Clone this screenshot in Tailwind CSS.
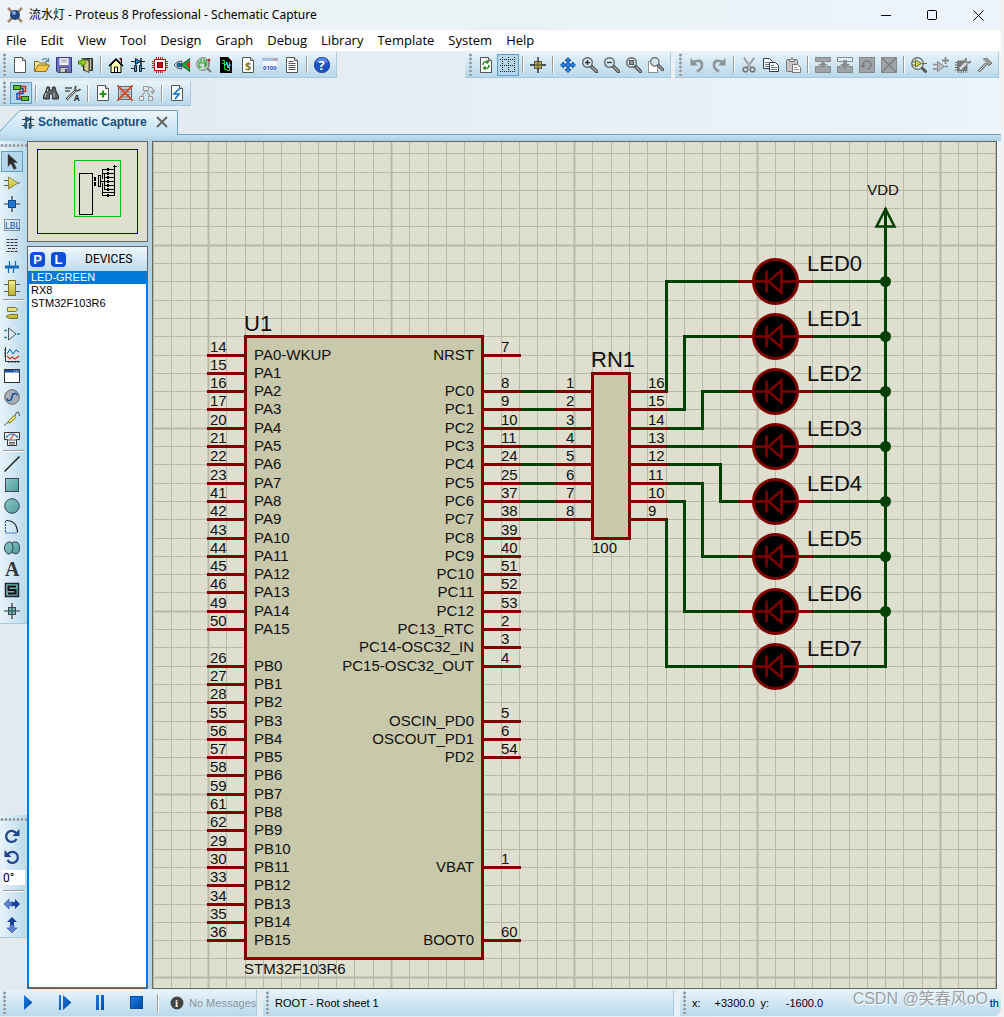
<!DOCTYPE html>
<html lang="en">

<head>
    <meta charset="UTF-8">
    <meta name="viewport" content="width=device-width, initial-scale=1.0">
    <title>流水灯 - Proteus 8 Professional - Schematic Capture</title>
    <script src="https://cdn.jsdelivr.net/npm/@tailwindcss/browser@4"></script>
</head>

<body class="h-screen overflow-hidden bg-[#f1f1f1] font-['Open_Sans','Noto_Sans_CJK_SC',sans-serif] text-black">

    <!-- shared icon parts -->
    <svg class="absolute h-0 w-0">
        <defs>
            <linearGradient id="tabfill" x1="0" y1="0" x2="0" y2="1">
                <stop offset="0" stop-color="#eef6fb" />
                <stop offset="1" stop-color="#bfe0f2" />
            </linearGradient>
            <linearGradient id="teal" x1="0" y1="0" x2="1" y2="1">
                <stop offset="0" stop-color="#8cc8c8" />
                <stop offset="1" stop-color="#4f9a98" />
            </linearGradient>
            <linearGradient id="gold" x1="0" y1="0" x2="0" y2="1">
                <stop offset="0" stop-color="#f2ee8c" />
                <stop offset="1" stop-color="#b9b02c" />
            </linearGradient>
            <linearGradient id="play" x1="0" y1="0" x2="1" y2="1">
                <stop offset="0" stop-color="#1a7ee6" />
                <stop offset="1" stop-color="#0048a0" />
            </linearGradient>
        </defs>
        <symbol id="page" viewBox="0 0 16 16">
            <path d="M2.500 .5h8l3 3v12h-11z" fill="#fdfdfd" stroke="#555" />
            <path d="M10.500 .5v3h3" fill="#ddd" stroke="#555" />
        </symbol>
        <symbol id="lens" viewBox="0 0 16 16">
            <path d="M9.500 9.500l5 5" stroke="#444" stroke-width="3.500" stroke-linecap="round" />
            <path d="M10 10l4.500 4.500" stroke="#aaa" stroke-width="1.500" stroke-linecap="round" />
            <circle cx="5.500" cy="5.500" r="4.800" fill="#d4e8f4" stroke="#666" stroke-width="1.400" />
        </symbol>
        <symbol id="parts" viewBox="0 0 16 16">
            <path d="M1 4.500h14M1 11.500h4M11 11.500h4" stroke="#222" />
            <path d="M5.500 1.500v6l5-3z" fill="#1883c9" stroke="#123" />
            <path d="M11 1v7" stroke="#123" stroke-width="1.500" />
            <path d="M4.500 8.500h2v6h-2zM9.500 8.500h2v6h-2z" fill="#3aa0dc" stroke="#123" />
        </symbol>
    </svg>

    <div class="mr-[3px] flex h-full flex-col bg-gradient-to-r from-[#e2e9ef] to-[#edf3fa]">

        <!-- title bar -->
        <header class="flex h-[30px] shrink-0 items-center rounded-tr-lg bg-gradient-to-r from-[#f0f3f7] via-[#e9f3f5] to-[#edf3fb] pl-[7px]">
            <svg class="h-4 w-4" viewBox="0 0 16 16">
                <path d="M1 1l4 4M15 1l-4 4M1 15l4-4M15 15l-4-4" stroke="#a08c70" stroke-width="2.500" />
                <circle cx="8" cy="8" r="5" fill="#24457f" />
                <circle cx="7" cy="6" r="2" fill="#7fa6e0" />
            </svg>
            <h1 class="ml-[6px] font-['Noto_Sans','Noto_Sans_CJK_SC',sans-serif] text-[12px]">流水灯 - Proteus 8 Professional - Schematic Capture</h1>
            <div class="ml-auto flex [&>button]:grid [&>button]:h-[30px] [&>button]:w-[46px] [&>button]:place-items-center">
                <button aria-label="Minimize"><svg width="11" height="11"><path d="M0 5.500h10" stroke="#000" /></svg></button>
                <button aria-label="Maximize"><svg width="11" height="11"><rect x=".5" y=".5" width="9" height="9" rx="1" fill="none" stroke="#000" /></svg></button>
                <button aria-label="Close"><svg width="11" height="11"><path d="M.5 .5l10 10M10.500 .5l-10 10" stroke="#000" /></svg></button>
            </div>
        </header>

        <!-- menu -->
        <nav class="flex h-[22px] shrink-0 items-center gap-[14px] border-b border-[#eee] bg-white pt-px pl-[6px] text-[13px]">
            <button>File</button>
            <button>Edit</button>
            <button>View</button>
            <button>Tool</button>
            <button>Design</button>
            <button>Graph</button>
            <button>Debug</button>
            <button>Library</button>
            <button>Template</button>
            <button>System</button>
            <button>Help</button>
        </nav>

        <!-- toolbar row 1 -->
        <div class="flex h-[26px] shrink-0">
            <div class="flex w-[337px] items-center border-r border-b border-[#a9c9dd] bg-gradient-to-b from-[#e8f3fa] to-[#b9d9eb] pl-[3px] [&_svg]:h-4 [&_svg]:w-4 [&>button]:grid [&>button]:h-[22px] [&>button]:w-[22px] [&>button]:place-items-center [&>hr]:mx-[3px] [&>hr]:h-[17px] [&>hr]:w-[2px] [&>hr]:border-0 [&>hr]:border-l [&>hr]:border-[#999] [&>hr]:bg-white">
                <span class="mr-[3px] h-[24px] w-[3px] bg-[radial-gradient(circle,#8d9ba6_1px,#eef4f8_2px)] bg-[size:3px_4px]"></span>
                <button aria-label="New project"><svg><use href="#page" /></svg></button>
                <button aria-label="Open project"><svg viewBox="0 0 16 16"><path d="M.5 14.500v-10h4l1 1.500h7v2" fill="#f7e79a" stroke="#8a6d1c" /><path d="M.5 14.500L4 8h11.500l-3.500 6.500z" fill="#f6c94b" stroke="#8a6d1c" /><path d="M8 3q4-3 6 1M14.500 1v3.500H11" fill="none" stroke="#5580a8" stroke-width="1.200" /></svg></button>
                <button aria-label="Save project"><svg viewBox="0 0 16 16"><path d="M.5 .5h15v15H2l-1.500-1.500z" fill="#6f6fc8" stroke="#34347c" /><path d="M3.500 1h9v7h-9z" fill="#f2f2fa" /><path d="M5 3h6M5 5h6" stroke="#999" /><path d="M4 10.500h8v5H4z" fill="#ccc" stroke="#555" /><path d="M9 12h2v3H9z" fill="#44448c" /></svg></button>
                <button aria-label="Close project"><svg viewBox="0 0 16 16"><path d="M5.500 1.500h9v12h-9z" fill="#555" stroke="#333" /><path d="M6 2l5 2v11.500l-5-2.500z" fill="#d3d08a" stroke="#444" /><path d="M12.500 2v11" stroke="#c9c980" /><path d="M.5 4H4V1l4 4.500L4 10V7H.5z" fill="#9bd11a" stroke="#46720b" /></svg></button>
                <hr>
                <button aria-label="Home page"><svg viewBox="0 0 16 16"><path d="M3 8v7.500h10V8L8 3z" fill="#ffffb0" stroke="#000" /><path d="M1 9l7-7 7 7" fill="none" stroke="#000" stroke-width="1.500" /><path d="M11.500 1.500h2V6" fill="#c22" stroke="#000" /><path d="M6.500 10h3v5.500h-3z" fill="#fff" stroke="#000" /></svg></button>
                <button aria-label="Schematic capture"><svg><use href="#parts" /></svg></button>
                <button aria-label="PCB layout"><svg viewBox="0 0 16 16"><path d="M4.500 0v16M6.500 0v16M8.500 0v16M10.500 0v16M0 4.500h16M0 6.500h16M0 8.500h16M0 10.500h16" stroke="#c01818" /><rect x="2.500" y="2.500" width="11" height="11" fill="#fff" stroke="#b00" /><rect x="5.500" y="5.500" width="5" height="5" fill="#c01010" stroke="#700" /></svg></button>
                <button aria-label="3D visualizer"><svg viewBox="0 0 16 16"><path d="M7 8l9-6.500v13z" fill="#16a83e" stroke="#0a4a18" /><path d="M12 7l4-3v8z" fill="#d22" /><path d="M0 8q4-5 8-4-2 4 0 8-4 1-8-4z" fill="#e8f4fa" stroke="#456" /><circle cx="5" cy="8" r="2.200" fill="#1778a8" stroke="#123" stroke-width=".6" /></svg></button>
                <button aria-label="Gerber viewer"><svg viewBox="0 0 16 16"><circle cx="7" cy="7" r="6.300" fill="#cfe0d8" stroke="#777" /><path d="M3 4v6h3M5 2v4h4v5M8 2v3M10 3v6" fill="none" stroke="#2a9a2a" stroke-width="1.200" /><path d="M11 11l4 4" stroke="#777" stroke-width="2" /><path d="M12.500 2.500v8" stroke="#888" stroke-width="2" /><circle cx="13" cy="3" r="1.500" fill="#b04040" /></svg></button>
                <button aria-label="Design explorer"><svg viewBox="0 0 16 16"><rect x="2" y="0" width="12" height="16" fill="#000" /><path d="M4 3.500h2.500v9H9M4 6.500h2M11.500 5v8M9 13.500h3" fill="none" stroke="#0d3" /><path d="M6 8h2l1-3 1 6 1-3h2" fill="none" stroke="#3ff" /><path d="M10 0l4 4V0z" fill="#fff" /></svg></button>
                <button aria-label="Bill of materials"><svg viewBox="0 0 16 16"><use href="#page" /><text x="5" y="13" font-size="11" font-weight="bold" fill="#8a7a20">$</text></svg></button>
                <button aria-label="Source code"><svg viewBox="0 0 16 16"><rect x="0" y="1" width="16" height="13" fill="#f3f6fc" stroke="#a8b8cc" stroke-width=".5" /><rect x="0" y="1" width="16" height="3" fill="#a8c0e4" /><path d="M11 2.500h1M13 2.500h2" stroke="#e63" /><text x="1" y="13" font-size="6" font-weight="bold" fill="#1a50c8">0100</text></svg></button>
                <button aria-label="Project notes"><svg viewBox="0 0 16 16"><use href="#page" /><path d="M4.500 4.500h5M4.500 6.500h7M4.500 8.500h7M4.500 10.500h7M4.500 12.500h7" stroke="#555" /></svg></button>
                <hr>
                <button aria-label="Help"><svg viewBox="0 0 16 16"><circle cx="8" cy="8" r="7.800" fill="#1c4fc0" stroke="#0c2f86" stroke-width=".6" /><path d="M2 6a6 5 0 0 1 12 0q-6-2-12 0z" fill="#5d8cec" /><text x="4.500" y="13" font-size="13" font-weight="bold" fill="#fff">?</text></svg></button>
            </div>

            <div class="ml-auto flex w-[206px] items-center border-r border-b border-[#a9c9dd] bg-gradient-to-b from-[#e8f3fa] to-[#b9d9eb] pl-[4px] [&_svg]:h-4 [&_svg]:w-4 [&>button]:grid [&>button]:h-[22px] [&>button]:w-[22px] [&>button]:place-items-center [&>hr]:mx-[3px] [&>hr]:h-[17px] [&>hr]:w-[2px] [&>hr]:border-0 [&>hr]:border-l [&>hr]:border-[#999] [&>hr]:bg-white">
                <span class="mr-[3px] h-[24px] w-[3px] bg-[radial-gradient(circle,#8d9ba6_1px,#eef4f8_2px)] bg-[size:3px_4px]"></span>
                <button aria-label="Redraw"><svg viewBox="0 0 16 16"><use href="#page" /><path d="M5 8q0-4 4-3M11 8q0 4-4 3" fill="none" stroke="#22861a" stroke-width="1.500" /><path d="M8.500 2.500v5l3-2.500zM7.500 8.500v5l-3-2.500z" fill="#22861a" /></svg></button>
                <button aria-label="Toggle grid" class="border border-[#5f9fc6] bg-[#b4d6ea]"><svg viewBox="0 0 16 16"><path d="M2.500 0v16M8.500 0v16M14.500 0v16M0 2.500h16M0 8.500h16M0 14.500h16" stroke="#222" stroke-dasharray="1 1" /></svg></button>
                <hr>
                <button aria-label="Origin"><svg viewBox="0 0 16 16"><path d="M8 0v16M0 8h16" stroke="#222" stroke-width="1.300" /><rect x="4.500" y="4.500" width="7" height="7" fill="#b8ac28" stroke="#555" /><path d="M8 3v10M3 8h10" stroke="#444" /></svg></button>
                <hr>
                <button aria-label="Pan"><svg viewBox="0 0 16 16"><path d="M8 .5l3 3H9V7h3.500V5l3 3-3 3V9H9v3.500h2l-3 3-3-3h2V9H3.500v2l-3-3 3-3v2H7V3.500H5z" fill="#2a8bf0" stroke="#0b3c90" stroke-width=".9" /></svg></button>
                <button aria-label="Zoom in"><svg viewBox="0 0 16 16"><use href="#lens" /><path d="M3 5.500h5M5.500 3v5" stroke="#333" stroke-width="1.300" /></svg></button>
                <button aria-label="Zoom out"><svg viewBox="0 0 16 16"><use href="#lens" /><path d="M3 5.500h5" stroke="#333" stroke-width="1.300" /></svg></button>
                <button aria-label="Zoom all"><svg viewBox="0 0 16 16"><use href="#lens" /><rect x="3.500" y="3.500" width="4" height="4" fill="#999" stroke="#555" /></svg></button>
                <button aria-label="Zoom area"><svg viewBox="0 0 16 16"><path d="M.5 4.500h9v11h-9z" fill="#fff" stroke="#333" stroke-dasharray="1 1" /><use href="#lens" x="2" width="14" height="14" /></svg></button>
            </div>

            <div class="mr-[2px] ml-[4px] flex w-[324px] items-center border-r border-b border-[#a9c9dd] bg-gradient-to-b from-[#e8f3fa] to-[#b9d9eb] pl-[4px] [&_svg]:h-4 [&_svg]:w-4 [&>button]:grid [&>button]:h-[22px] [&>button]:w-[22px] [&>button]:place-items-center [&>hr]:mx-[3px] [&>hr]:h-[17px] [&>hr]:w-[2px] [&>hr]:border-0 [&>hr]:border-l [&>hr]:border-[#999] [&>hr]:bg-white">
                <span class="mr-[4px] h-[24px] w-[3px] bg-[radial-gradient(circle,#8d9ba6_1px,#eef4f8_2px)] bg-[size:3px_4px]"></span>
                <button aria-label="Undo"><svg viewBox="0 0 16 16"><path d="M3 5.500Q13 1 13 8q0 4-5 6.500" fill="none" stroke="#8f9496" stroke-width="2.600" /><path d="M1.500 1v7.500H9z" fill="#8f9496" /></svg></button>
                <button aria-label="Redo"><svg viewBox="0 0 16 16"><path d="M13 5.500Q3 1 3 8q0 4 5 6.500" fill="none" stroke="#8f9496" stroke-width="2.600" /><path d="M14.500 1v7.500H7z" fill="#8f9496" /></svg></button>
                <hr>
                <button aria-label="Cut"><svg viewBox="0 0 16 16"><path d="M3 1l7 9.500M13 1L6 10.500" stroke="#888" stroke-width="2" /><path d="M4 1.500l6 8.500M12 1.500L6 10" stroke="#ddd" stroke-width=".6" /><circle cx="4.500" cy="12.500" r="2.300" fill="none" stroke="#777" stroke-width="1.600" /><circle cx="11.500" cy="12.500" r="2.300" fill="none" stroke="#777" stroke-width="1.600" /></svg></button>
                <button aria-label="Copy"><svg viewBox="0 0 16 16"><path d="M.5 1.500h6l3 3v7h-9z" fill="#fff" stroke="#2d3a52" /><path d="M2 5.500h4M2 7.500h4M2 9.500h4" stroke="#678" /><path d="M6.500 5.500h6l3 3v6h-9z" fill="#fff" stroke="#2d3a52" /><path d="M8 8.500h3M8 10.500h6M8 12.500h6" stroke="#678" /></svg></button>
                <button aria-label="Paste"><svg viewBox="0 0 16 16"><rect x="1.500" y="2.500" width="11" height="12" rx="1" fill="#c5c5c5" stroke="#777" /><path d="M4.500 4.500v-2h1.500l1-2 1 2h1.500v2z" fill="#e8e8e8" stroke="#777" /><path d="M7.500 7.500h5l3 3v5h-8z" fill="#f6f6f6" stroke="#777" /><path d="M9 10.500h3M9 12.500h5" stroke="#999" /></svg></button>
                <hr>
                <button aria-label="Block copy"><svg viewBox="0 0 16 16"><path d="M.5 .5h15v4h-15zM.5 9.500h4l3.500 3 3.500-3h4v6H.5z" fill="#a0a4a6" stroke="#85898b" /><path d="M6 3h4v4h3l-5 5-5-5h3z" fill="#8b8f91" stroke="#c4c8ca" stroke-width=".5" /></svg></button>
                <button aria-label="Block move"><svg viewBox="0 0 16 16"><path d="M.5 .5h15v4h-15z" fill="#e2eef5" stroke="#85898b" /><path d="M.5 9.500h4l3.500 3 3.500-3h4v6H.5z" fill="#a0a4a6" stroke="#85898b" /><path d="M6 3h4v4h3l-5 5-5-5h3z" fill="#8b8f91" /></svg></button>
                <button aria-label="Block rotate"><svg viewBox="0 0 16 16"><rect x=".5" y=".5" width="15" height="15" fill="#a0a4a6" stroke="#85898b" /><path d="M4 8a4 4 0 1 1 4 4" fill="none" stroke="#777b7d" stroke-width="1.500" /><path d="M1.500 8h5L4 11z" fill="#777b7d" /></svg></button>
                <button aria-label="Block delete"><svg viewBox="0 0 16 16"><rect x=".5" y=".5" width="15" height="15" fill="#a0a4a6" stroke="#85898b" /><path d="M1 1l14 14M15 1L1 15" stroke="#777b7d" stroke-width="1.300" /></svg></button>
                <hr>
                <button aria-label="Pick parts"><svg viewBox="0 0 16 16"><path d="M10.500 10.500l4 4" stroke="#555" stroke-width="3" stroke-linecap="round" /><circle cx="6.500" cy="6.500" r="5.800" fill="#d4e8f4" stroke="#666" stroke-width="1.300" /><path d="M4.500 3v7l6-3.500z" fill="#d6d050" stroke="#6c7020" /><path d="M1 5h3M1 8h3M11 6.500h5" stroke="#6c7020" /></svg></button>
                <button aria-label="Make device"><svg viewBox="0 0 16 16"><path d="M4.500 4.500v10l7-5z" fill="#b8bcbe" stroke="#888" /><path d="M0 7.500h4M0 12h4M12 9.500h3" stroke="#888" stroke-width="1.300" /><path d="M12.500 0v7M9 3.500h7" stroke="#888" stroke-width="1.800" /></svg></button>
                <button aria-label="Packaging tool"><svg viewBox="0 0 16 16"><path d="M3.500 3v13M6 3v13M8.500 3v13M11 3v13M0 5.500h13M0 8h13M0 10.500h13M0 13h13" stroke="#666" /><rect x="2" y="4" width="10" height="10" fill="#777" /><path d="M5 12l7-7" stroke="#ddd" stroke-width="2.600" /><path d="M11 1q-1 4 1.500 4.500T16 4" fill="none" stroke="#888" stroke-width="2.200" /></svg></button>
                <button aria-label="Decompose"><svg viewBox="0 0 16 16"><path d="M1.500 14.500l8-8" stroke="#777" stroke-width="3" /><path d="M2 14l8-8" stroke="#ddd" /><path d="M6 2.500q4-3 6 1l3 2.500-3 3-2.500-3" fill="#999" stroke="#777" /></svg></button>
            </div>
        </div>

        <!-- toolbar row 2 -->
        <div class="mt-[3px] flex h-[25px] w-[191px] shrink-0 items-center border-r border-b border-[#a9c9dd] bg-gradient-to-b from-[#e8f3fa] to-[#b9d9eb] pl-[3px] [&_svg]:h-4 [&_svg]:w-4 [&>button]:grid [&>button]:h-[22px] [&>button]:w-[22px] [&>button]:place-items-center [&>hr]:mx-[3px] [&>hr]:h-[17px] [&>hr]:w-[2px] [&>hr]:border-0 [&>hr]:border-l [&>hr]:border-[#999] [&>hr]:bg-white">
            <span class="mr-[4px] h-[24px] w-[3px] bg-[radial-gradient(circle,#8d9ba6_1px,#eef4f8_2px)] bg-[size:3px_4px]"></span>
            <button aria-label="Wire autorouter" class="border border-[#5f9fc6] bg-[#b4d6ea]"><svg viewBox="0 0 16 16"><rect x=".5" y=".5" width="7" height="4" fill="#5cc02c" stroke="#1d5c0c" /><rect x="8.500" y="11.500" width="7" height="4" fill="#5cc02c" stroke="#1d5c0c" /><path d="M8 1.500h4.500v5H6.500v6H9" fill="none" stroke="#d42a10" stroke-width="1.500" /><path d="M8 3.500h2v5H4v5.500h4" fill="none" stroke="#1648b8" stroke-width="1.500" /></svg></button>
            <hr>
            <button aria-label="Find"><svg viewBox="0 0 16 16"><path d="M4 2h2.500v3h3V2H12l1 4 2.500 5v3H9.500V9h-3v5H.5v-3L3 6z" fill="#5c6266" stroke="#333" /><path d="M3 8l-1 4M11 8v4M4.500 4v2" stroke="#ccc" /></svg></button>
            <button aria-label="Property assignment"><svg viewBox="0 0 16 16" class="overflow-visible"><path d="M0 3h7M0 6h5" stroke="#555" stroke-width="1.300" /><path d="M1.500 14.500l9-9" stroke="#555" stroke-width="2.500" /><path d="M2 14l8-8" stroke="#ddd" /><path d="M11 1q-2 4 .5 4.500T15.500 4" fill="none" stroke="#555" stroke-width="1.800" /><text x="9" y="16" font-size="8" font-weight="bold" fill="#222">A</text></svg></button>
            <hr>
            <button aria-label="New sheet"><svg viewBox="0 0 16 16"><use href="#page" /><path d="M8 5.500v7M4.500 9h7" stroke="#1f9a10" stroke-width="2.200" /></svg></button>
            <button aria-label="Remove sheet"><svg viewBox="0 0 16 16"><rect x="1.500" y="1.500" width="13" height="13" fill="#c8cccd" stroke="#666" /><path d="M3 4.500h10M3 7h10M3 9.500h10M3 12h10" stroke="#777" /><path d="M0 0l16 16M16 0L0 16" stroke="#d8452c" stroke-width="1.800" /></svg></button>
            <button aria-label="Exit to parent"><svg viewBox="0 0 16 16"><path d="M4.500 1.500h5v4h-5zM.5 11.500h4v4h-4zM9.500 11.500h4v4h-4z" fill="#e6e6e6" stroke="#999" /><path d="M6.500 6L3 11M8 6l3 5M10 2.500q5-1 4 5M11.500 6l2.500 2.500L15.500 5" fill="none" stroke="#999" stroke-width="1.200" /></svg></button>
            <hr>
            <button aria-label="Electrical rule check"><svg viewBox="0 0 16 16"><use href="#page" /><path d="M10.500 3.500L5 9h5l-4 5" fill="none" stroke="#0c72c8" stroke-width="1.600" /></svg></button>
        </div>

        <!-- document tabs -->
        <div class="relative mt-[4px] flex h-[25px] shrink-0 items-center border-b border-[#6ba3c4] pl-[21px]">
            <svg class="absolute top-0 left-0" width="179" height="25"><path d="M0 21L20 .5H177.500V25H0z" fill="url(#tabfill)" /><path d="M0 21L20 .5H177.500V25" fill="none" stroke="#6ba3c4" /></svg>
            <svg class="relative h-[15px] w-[14px]"><use href="#parts" /></svg>
            <button class="relative ml-[3px] font-['Liberation_Sans',Arial,sans-serif] text-[12px] font-bold text-[#1d4f7d]">Schematic Capture</button>
            <button aria-label="Close tab" class="relative ml-[9px]"><svg width="12" height="12"><path d="M1 1l10 10M11 1L1 11" stroke="#666" stroke-width="2" /></svg></button>
        </div>
        <div class="h-[6px] shrink-0 bg-gradient-to-b from-[#c2e0f1] to-[#aed0e3]"></div>

        <!-- work area -->
        <main class="flex min-h-0 flex-1">

            <!-- mode toolbar -->
            <aside class="flex w-[27px] shrink-0 flex-col justify-between">
                <div class="border-b border-[#a9c9dd] bg-gradient-to-r from-[#e8f3fa] to-[#b9d9eb] pb-[2px] [&_svg]:h-4 [&_svg]:w-4 [&>button]:ml-px [&>button]:grid [&>button]:h-[21px] [&>button]:w-[22px] [&>button]:place-items-center [&>hr]:mx-[3px] [&>hr]:my-px [&>hr]:h-[2px] [&>hr]:border-0 [&>hr]:border-t [&>hr]:border-[#999] [&>hr]:bg-white">
                    <span class="mt-[3px] mb-[4px] block h-[3px] bg-[radial-gradient(circle,#8d9ba6_1px,#eef4f8_2px)] bg-[size:4px_3px]"></span>
                    <button aria-label="Selection" class="border border-[#5f9fc6] bg-[#b4d6ea]"><svg viewBox="0 0 16 16"><path d="M4 0v12.500l3-3L10 15.500l2.500-1.300L9.500 8.500h4z" fill="#2b2b2b" stroke="#555" stroke-width=".5" /></svg></button>
                    <button aria-label="Component"><svg viewBox="0 0 16 16"><path d="M0 5.500h4M0 10.500h4M13 8h3" stroke="#555" /><path d="M4.500 2v12L14 8z" fill="url(#gold)" stroke="#8a8650" /></svg></button>
                    <button aria-label="Junction dot"><svg viewBox="0 0 16 16"><path d="M8 0v16M0 8h16" stroke="#333" stroke-width="1.200" /><rect x="4.500" y="4.500" width="7" height="7" fill="#1f78d0" stroke="#0d4890" /></svg></button>
                    <button aria-label="Wire label"><svg viewBox="0 0 16 16"><rect x=".5" y="2.500" width="15" height="11" fill="none" stroke="#333" stroke-dasharray="1 1" /><text x="1" y="12" font-size="9" font-family="Roboto" fill="#0a4ca0">LBL</text></svg></button>
                    <button aria-label="Text script"><svg viewBox="0 0 16 16"><path d="M2.500 1.500h11M2.500 4.500h11M2.500 7.500h11M4 10.500h9M2.500 13.500h11" stroke="#333" stroke-dasharray="3 1" /></svg></button>
                    <button aria-label="Bus"><svg viewBox="0 0 16 16"><path d="M5.500 2v6M11.500 2v6M4.500 9v5M9.500 9v5" stroke="#1769bb" stroke-width="1.200" /><path d="M1 8h14" stroke="#1769bb" stroke-width="3" /></svg></button>
                    <button aria-label="Subcircuit"><svg viewBox="0 0 16 16"><path d="M0 4.500h16M0 11.500h16" stroke="#555" /><rect x="4.500" y=".5" width="7" height="15" fill="url(#gold)" stroke="#77732e" /></svg></button>
                    <hr>
                    <button aria-label="Terminal"><svg viewBox="0 0 16 16"><path d="M3.500 2.500h8L14 4.500l-2.500 2h-8zM13.500 9.500h-8L2 11.500l3.500 2h8z" fill="url(#gold)" stroke="#77732e" /></svg></button>
                    <button aria-label="Device pin"><svg viewBox="0 0 16 16"><path d="M0 4.500h3M0 11.500h3M13 8h3" stroke="#2b9090" stroke-width="1.400" /><path d="M4.500 2v12L12 8z" fill="none" stroke="#555" /></svg></button>
                    <button aria-label="Graph"><svg viewBox="0 0 16 16"><path d="M1.500 0v14.500H16M0 3h1.500M0 6h1.500M0 9h1.500M5 14.500v1.500M8 14.500v1.500M11 14.500v1.500M14 14.500v1.500" stroke="#333" fill="none" /><path d="M3 7l3-5 3 5 3-4 3 2" fill="none" stroke="#0a62b8" /><path d="M3 9l3 3 2-2 3 2 4-3" fill="none" stroke="#d03a10" stroke-width="1.200" /></svg></button>
                    <button aria-label="Active popup"><svg viewBox="0 0 16 16"><rect x=".5" y="1.500" width="15" height="13" fill="#fff" stroke="#333" /><rect x="1" y="2" width="14" height="2.500" fill="#1450b4" /><path d="M10 3h1M12 3h1M14 3h.5" stroke="#fff" /></svg></button>
                    <button aria-label="Generator"><svg viewBox="0 0 16 16"><circle cx="8" cy="8" r="7.300" fill="#a9aeb4" stroke="#666" /><path d="M3 9.500q0 2.500 2.500 2t2.500-3.500 2.500-3.500 2.500 2" fill="none" stroke="#134d9c" stroke-width="1.500" /></svg></button>
                    <button aria-label="Probe"><svg viewBox="0 0 16 16"><path d="M0 15.500l5-4" stroke="#555" /><path d="M4 12l6-6.500 2 2L6 13z" fill="#f0ec60" stroke="#77732e" /><path d="M11 6q1-5 3.500-4l1 4" fill="none" stroke="#555" /></svg></button>
                    <button aria-label="Instruments"><svg viewBox="0 0 16 16"><path d="M.5 1.500h15v7h-3v6h-9v-6h-3z" fill="#f5f5f5" stroke="#333" /><path d="M2 6.500q6-7 12 0" fill="none" stroke="#1e6ab8" stroke-width="1.200" /><path d="M6 8.500l4-5" stroke="#d22" stroke-width="1.200" /><path d="M3.500 9h9M5 11.500h6M5 13h6" stroke="#555" /></svg></button>
                    <hr>
                    <button aria-label="2D line"><svg viewBox="0 0 16 16"><path d="M.5 15.500l15-15" stroke="#222" stroke-width="1.500" /></svg></button>
                    <button aria-label="2D box"><svg viewBox="0 0 16 16"><rect x="1.500" y="1.500" width="13" height="13" fill="url(#teal)" stroke="#445" /></svg></button>
                    <button aria-label="2D circle"><svg viewBox="0 0 16 16"><circle cx="8" cy="8" r="7.300" fill="url(#teal)" stroke="#345" /></svg></button>
                    <button aria-label="2D arc"><svg viewBox="0 0 16 16"><path d="M1.500 2v12h12" fill="none" stroke="#1450b4" stroke-dasharray="2 1" /><path d="M2 1.500q11 0 11.500 12" fill="none" stroke="#222" stroke-width="1.200" /></svg></button>
                    <button aria-label="2D path"><svg viewBox="0 0 16 16"><path d="M8 3Q5 .5 2.500 3t-2 6 3.500 5q3 .5 4-2 3 3 5.500 1.500t2-6.500-4-5Q10 1.500 8 3z" fill="url(#teal)" stroke="#345" /><path d="M8 3q2.500 4.500 0 9" fill="none" stroke="#345" /></svg></button>
                    <button aria-label="2D text"><svg viewBox="0 0 16 16" class="overflow-visible"><text x="1" y="15" font-size="20" font-weight="bold" font-family="Liberation Serif" fill="#333">A</text></svg></button>
                    <button aria-label="2D symbol"><svg viewBox="0 0 16 16"><rect x="1.500" y="1.500" width="13" height="13" fill="url(#teal)" stroke="#223" stroke-width="1.500" /><path d="M12 4.500H4.500V8h7v3.500H4" fill="none" stroke="#111" stroke-width="2" /></svg></button>
                    <button aria-label="Marker"><svg viewBox="0 0 16 16"><path d="M8 0v16M0 8h16" stroke="#333" stroke-width="1.200" /><rect x="4.500" y="4.500" width="7" height="7" fill="#6fb8b0" stroke="#445" /><path d="M8 4v8M4 8h8" stroke="#345" /></svg></button>
                </div>

                <div class="mb-[51px] border-b border-[#a9c9dd] bg-gradient-to-r from-[#e8f3fa] to-[#b9d9eb] pb-[2px] [&_svg]:h-4 [&_svg]:w-4 [&>button]:ml-px [&>button]:grid [&>button]:h-[21px] [&>button]:w-[22px] [&>button]:place-items-center [&>hr]:mx-[3px] [&>hr]:my-px [&>hr]:h-[2px] [&>hr]:border-0 [&>hr]:border-t [&>hr]:border-[#999] [&>hr]:bg-white">
                    <span class="mt-[3px] mb-[4px] block h-[3px] bg-[radial-gradient(circle,#8d9ba6_1px,#eef4f8_2px)] bg-[size:4px_3px]"></span>
                    <button aria-label="Rotate clockwise"><svg viewBox="0 0 16 16"><path d="M12 5A5.500 5.500 0 1 0 12.500 11" fill="none" stroke="#20448e" stroke-width="2.300" /><path d="M15.500 1v7h-7z" fill="#20448e" /></svg></button>
                    <button aria-label="Rotate anti-clockwise"><svg viewBox="0 0 16 16"><path d="M4 5A5.500 5.500 0 1 1 3.500 11" fill="none" stroke="#20448e" stroke-width="2.300" /><path d="M.5 1v7h7z" fill="#20448e" /></svg></button>
                    <input aria-label="Rotation angle" value="0°" class="mt-[3px] mb-[5px] ml-[2px] block h-[15px] w-[23px] bg-white pl-px font-[Roboto,sans-serif] text-[12px]">
                    <hr>
                    <button aria-label="Mirror horizontally"><svg viewBox="0 0 16 16"><path d="M8 6H5V3L0 8l5 5v-3h3z" fill="#5f82cc" stroke="#2c4f9c" stroke-width=".6" /><path d="M8 6h3V3l5 5-5 5v-3H8z" fill="#173f94" /></svg></button>
                    <button aria-label="Mirror vertically"><svg viewBox="0 0 16 16"><path d="M6 8V5H3l5-5 5 5h-3v3z" fill="#173f94" /><path d="M6 8v3H3l5 5 5-5h-3V8z" fill="#5f82cc" stroke="#2c4f9c" stroke-width=".6" /></svg></button>
                </div>
            </aside>

            <!-- overview and device list -->
            <section class="flex w-[125px] shrink-0 flex-col bg-[#b3d3e5] pr-[4px]">
                <div class="h-[101px] shrink-0 border border-[#666] bg-[#dfdfcf]">
                    <svg class="h-full w-full" shape-rendering="crispEdges" fill="none">
                        <rect x="9.500" y="7.500" width="100" height="84" stroke="#0000b4" />
                        <rect x="46.500" y="18.500" width="46" height="56" stroke="#00c000" />
                        <rect x="51.500" y="31.500" width="13" height="41" stroke="#000" />
                        <path d="M66 35h2v4h-2zM66 40h2v4h-2z" fill="#000" />
                        <rect x="70.500" y="33.500" width="2" height="11" stroke="#000" />
                        <path d="M86.500 23v31M85 24.500h4M74.500 27v10M74.500 41v13M75 27.500h12M75 31.500h12M77 35.500h10M73 39.500h14M77 43.500h10M76 47.500h11M75 50.500h12M74 53.500h13M76.500 32v16" stroke="#000" />
                        <path d="M80 26v3M80 30v3M80 34v3M80 38v3M80 42v3M80 46v3M80 52v3" stroke="#000" stroke-width="2" />
                    </svg>
                </div>
                <div class="mt-[4px] flex min-h-0 flex-1 flex-col border border-[#666] bg-white font-['Liberation_Sans',Arial,sans-serif] text-[11px]">
                    <div class="flex h-[24px] shrink-0 items-center bg-gradient-to-b from-[#eef6fb] to-[#bddcee] pl-[2px]">
                        <button class="h-[15px] w-[15px] rounded-sm bg-[#0d4fd8] text-[13px] leading-[15px] font-bold text-white">P</button>
                        <button class="ml-[6px] h-[15px] w-[15px] rounded-sm bg-[#0d4fd8] text-[13px] leading-[15px] font-bold text-white">L</button>
                        <h2 class="ml-[19px] font-[Roboto,sans-serif] text-[12px]">DEVICES</h2>
                    </div>
                    <ul class="flex-1 border border-t-0 border-[#0078d7] leading-[13px] [&>li]:pl-[2px]">
                        <li class="bg-[#0078d7] text-white">LED-GREEN</li>
                        <li>RX8</li>
                        <li>STM32F103R6</li>
                    </ul>
                </div>
            </section>

            <!-- drawing sheet -->
            <section class="mr-[4px] min-w-0 flex-1 border border-[#666] bg-[#dfdfcf]">
                <svg class="block h-full w-full font-['Liberation_Sans',Arial,sans-serif]">
                    <g id="sheet" transform="translate(-153,-142)"></g>
                </svg>
            </section>
        </main>

        <!-- status bar -->
        <footer class="relative mt-px mb-px flex h-[26px] shrink-0 rounded-b-lg font-['Liberation_Sans',Arial,sans-serif] text-[11px] whitespace-nowrap">
            <div class="flex w-[257px] items-center border-r border-[#a9c9dd] bg-gradient-to-b from-[#e8f3fa] to-[#b9d9eb] pl-[3px] [&>*]:shrink-0">
                <span class="h-[24px] w-[3px] bg-[radial-gradient(circle,#8d9ba6_1px,#eef4f8_2px)] bg-[size:3px_4px]"></span>
                <button aria-label="Play" class="ml-[18px]"><svg width="9" height="16"><path d="M0 0l8.500 7.500L0 15z" fill="url(#play)" /></svg></button>
                <button aria-label="Step" class="ml-[26px]"><svg width="13" height="16"><path d="M0 0h2v15H0zM4 0l8.500 7.500L4 15z" fill="url(#play)" /></svg></button>
                <button aria-label="Pause" class="ml-[24px]"><svg width="9" height="16"><path d="M0 0h3v15H0zM5 0h3v15H5z" fill="url(#play)" /></svg></button>
                <button aria-label="Stop" class="ml-[25px]"><svg width="14" height="14"><rect x=".5" y=".5" width="12" height="12" fill="url(#play)" stroke="#0a4aa0" /></svg></button>
                <span class="ml-[13px] h-[18px] w-[2px] border-l border-[#999] bg-white"></span>
                <svg class="ml-[11px]" width="14" height="14"><circle cx="7" cy="7" r="6.500" fill="#444" /><text x="5" y="11" font-size="11" font-weight="bold" font-family="Liberation Serif" fill="#fff">i</text></svg>
                <span class="ml-[5px] text-[#8a969e]">No Messages</span>
            </div>
            <div class="ml-[6px] flex flex-1 items-center border-r border-[#a9c9dd] bg-gradient-to-b from-[#e8f3fa] to-[#b9d9eb] pl-[3px]">
                <span class="h-[24px] w-[3px] bg-[radial-gradient(circle,#8d9ba6_1px,#eef4f8_2px)] bg-[size:3px_4px]"></span>
                <span class="ml-[6px]">ROOT - Root sheet 1</span>
            </div>
            <div class="ml-[6px] flex w-[321px] items-center rounded-br-lg bg-gradient-to-b from-[#e8f3fa] to-[#b9d9eb] pl-[3px]">
                <span class="h-[24px] w-[3px] bg-[radial-gradient(circle,#8d9ba6_1px,#eef4f8_2px)] bg-[size:3px_4px]"></span>
                <span class="ml-[6px]">x:</span>
                <span class="w-[54px] text-right">+3300.0</span>
                <span class="ml-[6px]">y:</span>
                <span class="w-[54px] text-right">-1600.0</span>
                <span class="mr-[2px] ml-auto text-[#000080]">th</span>
            </div>
            <span class="absolute right-[13px] bottom-[7px] font-['Liberation_Sans','Noto_Sans_CJK_SC',sans-serif] text-[16px] leading-5 text-[#999fa3] [text-shadow:1px_1px_1px_#fff]">CSDN @笑春风oO</span>
        </footer>
    </div>

    <script>
        const RED = '#800000', GREEN = '#004000', INK = '#101010';
        // grid coordinates to pixel centres, ten minor squares to a major one
        const gx = n => Math.round(208 + 18.3 * n) + 0.5;
        const gy = n => Math.round(244.72 + 18.3 * n) + 0.5;

        let out = '';
        const line = (points, color) => out += `<polyline points="${points}" fill="none" stroke="${color}" stroke-width="3"/>`;
        const text = (x, y, s, size = 15, anchor = 'start') =>
            out += `<text x="${x}" y="${Math.floor(y)}" font-size="${size}" text-anchor="${anchor}" fill="${INK}">${s}</text>`;

        // grid
        for (let n = -3; n < 120; n++) {
            out += `<path d="M${gx(n)} 0V3000" stroke="#b9b9aa" stroke-width="${n % 10 === 0 ? 2 : 1}"/>`;
        }
        for (let n = -5; n < 120; n++) {
            out += `<path d="M0 ${gy(n)}H3000" stroke="#b9b9aa" stroke-width="${n % 10 === 0 ? 2 : 1}"/>`;
        }

        // U1, rows are counted from the first pin
        const leftPins = [14, 15, 16, 17, 20, 21, 22, 23, 41, 42, 43, 44, 45, 46, 49, 50, null,
            26, 27, 28, 55, 56, 57, 58, 59, 61, 62, 29, 30, 33, 34, 35, 36];
        const rightPins = [
            [0, 7, 'NRST'], [2, 8, 'PC0'], [3, 9, 'PC1'], [4, 10, 'PC2'], [5, 11, 'PC3'], [6, 24, 'PC4'],
            [7, 25, 'PC5'], [8, 37, 'PC6'], [9, 38, 'PC7'], [10, 39, 'PC8'], [11, 40, 'PC9'], [12, 51, 'PC10'],
            [13, 52, 'PC11'], [14, 53, 'PC12'], [15, 2, 'PC13_RTC'], [16, 3, 'PC14-OSC32_IN'],
            [17, 4, 'PC15-OSC32_OUT'], [20, 5, 'OSCIN_PD0'], [21, 6, 'OSCOUT_PD1'], [22, 54, 'PD2'],
            [28, 1, 'VBAT'], [32, 60, 'BOOT0']
        ];
        out += `<rect x="245.5" y="336.5" width="237" height="622" fill="#c8c8aa" stroke="${RED}" stroke-width="3"/>`;
        leftPins.forEach((num, i) => {
            if (num === null) return;
            const y = gy(6 + i);
            const name = i === 0 ? 'PA0-WKUP' : i < 16 ? 'PA' + i : 'PB' + (i - 17);
            line(`207,${y} 245,${y}`, RED);
            text(210, y - 3, num);
            text(254, y + 5, name);
        });
        rightPins.forEach(([row, num, name]) => {
            const y = gy(6 + row);
            line(`483,${y} 521,${y}`, RED);
            text(501, y - 3, num);
            text(474, y + 5, name, 15, 'end');
        });
        text(244, 331, 'U1', 22);
        text(244, 974, 'STM32F103R6');

        // RN1
        for (let i = 0; i < 8; i++) {
            const y = gy(8 + i);
            line(`521,${y} 555,${y}`, GREEN);
            line(`555,${y} 592,${y}`, RED);
            line(`630,${y} 668,${y}`, RED);
            text(566, y - 3, i + 1);
            text(648, y - 3, 16 - i);
        }
        out += `<rect x="592.5" y="373.5" width="37" height="165" fill="#c8c8aa" stroke="${RED}" stroke-width="3"/>`;
        text(591, 367, 'RN1', 22);
        text(592, 553, '100');

        // LEDs and their wires, bend is the grid column where each wire turns
        const bends = [25, 26, 27, 25, 28, 27, 26, 25];
        bends.forEach((bend, i) => {
            const pin = gy(8 + i), y = gy(2 + 3 * i), x = gx(bend);
            line(`${bend === 25 ? x : 668},${pin} ${x},${pin} ${x},${y} 738,${y}`, GREEN);
            line(`738,${y} 813,${y}`, RED);
            line(`813,${y} 885.5,${y}`, GREEN);
            out += `<circle cx="775.5" cy="${y}" r="22" fill="#000" stroke="${RED}" stroke-width="3"/>
                <path d="M753 ${y}h14M782 ${y}h16M766.5 ${y - 11}v22M781.5 ${y - 11}v22l-13-11z" fill="none" stroke="${RED}" stroke-width="2.500"/>`;
            text(807, y - 10, 'LED' + i, 22);
            if (i < 7) out += `<circle cx="885.5" cy="${y}" r="5.500" fill="${GREEN}"/>`;
        });

        // supply rail
        line(`885.5,208 885.5,${gy(23) + 1.5}`, GREEN);
        out += `<path d="M885.5 209l-9 17.500h18z" fill="none" stroke="${GREEN}" stroke-width="2.500"/>`;
        text(883, 195, 'VDD', 15, 'middle');

        document.getElementById('sheet').innerHTML = out;
    </script>
</body>

</html>
